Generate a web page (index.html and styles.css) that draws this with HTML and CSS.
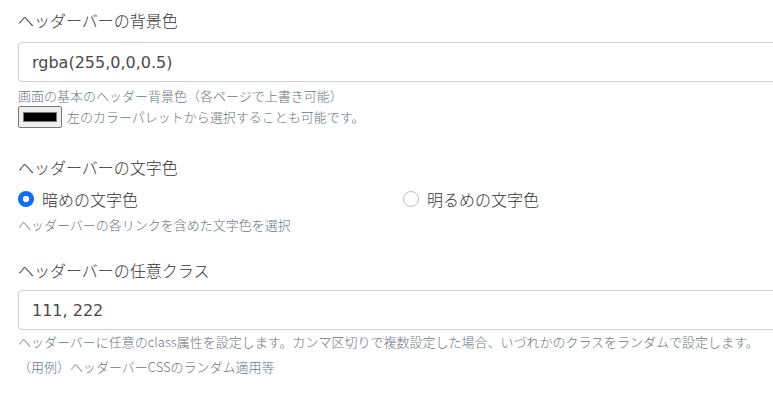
FILE: index.html
```html
<!DOCTYPE html>
<html lang="ja">
<head>
<meta charset="utf-8">
<link rel="stylesheet" href="styles.css">
</head>
<body>
<div class="form">
  <div class="group g1">
    <div class="label">ヘッダーバーの背景色</div>
    <input class="text" type="text" value="rgba(255,0,0,0.5)">
    <div class="help">画面の基本のヘッダー背景色（各ページで上書き可能）</div>
    <div class="picker-row">
      <input class="picker" type="color" value="#000000">
      <span class="help">左のカラーパレットから選択することも可能です。</span>
    </div>
  </div>
  <div class="group g2">
    <div class="label">ヘッダーバーの文字色</div>
    <div class="radios">
      <label class="radio"><span class="dot checked"></span><span>暗めの文字色</span></label>
      <label class="radio"><span class="dot"></span><span>明るめの文字色</span></label>
    </div>
    <div class="help">ヘッダーバーの各リンクを含めた文字色を選択</div>
  </div>
  <div class="group g3">
    <div class="label">ヘッダーバーの任意クラス</div>
    <input class="text" type="text" value="111, 222">
    <div class="help">ヘッダーバーに任意のclass属性を設定します。カンマ区切りで複数設定した場合、いづれかのクラスをランダムで設定します。</div>
    <div class="help ex">（用例）ヘッダーバーCSSのランダム適用等</div>
  </div>
</div>
</body>
</html>
```

FILE: styles.css
```css
html, body {
  margin: 0;
  padding: 0;
  overflow: hidden;
  background: #fff;
}
body {
  font-family: "Noto Sans CJK JP", "Noto Sans", sans-serif;
  color: #333;
  padding: 8px 0 0 18px;
}
.form {
  width: 770px;
}
.label {
  font-size: 16px;
  line-height: 24px;
  font-weight: 300;
  color: #333;
}
.text {
  display: block;
  box-sizing: border-box;
  width: 100%;
  height: 40px;
  border: 1px solid #ced4da;
  border-radius: 4px;
  padding: 0 13px;
  font-family: "DejaVu Sans", "Noto Sans CJK JP", sans-serif;
  font-size: 16px;
  color: #4a4a4a;
  background: #fff;
  outline: none;
}
.g1 .text {
  margin-top: 10px;
}
.help {
  font-size: 13px;
  line-height: 20px;
  font-weight: 300;
  color: #6c757d;
}
.g1 .help {
  margin-top: 4px;
}
.picker-row {
  display: flex;
  align-items: center;
  gap: 5px;
  height: 22px;
}
.picker-row .help {
  margin-top: 0;
}
.picker {
  box-sizing: border-box;
  width: 44px;
  height: 22px;
  margin: 0;
  padding: 1px 2px;
  border: 1px solid #767676;
  border-radius: 2px;
  background: #efefef;
}
.g2 {
  margin-top: 27px;
}
.radios {
  display: grid;
  grid-template-columns: 1fr 1fr;
  margin-top: 8px;
}
.radio {
  display: flex;
  align-items: center;
  gap: 8px;
  font-size: 16px;
  line-height: 24px;
  font-weight: 300;
  color: #333;
}
.dot {
  box-sizing: border-box;
  width: 16px;
  height: 16px;
  border-radius: 50%;
  border: 1px solid #bdbdbd;
  background: #fff;
}
.dot.checked {
  border: none;
  background: radial-gradient(circle, #fff 0 3px, #0d6efd 3.5px);
}
.g2 .help {
  margin-top: 4px;
}
.g3 {
  margin-top: 23px;
}
.g3 .text {
  margin-top: 8px;
}
.g3 .help {
  margin-top: 2px;
}
.g3 .help.ex {
  margin-top: 5px;
}
```
